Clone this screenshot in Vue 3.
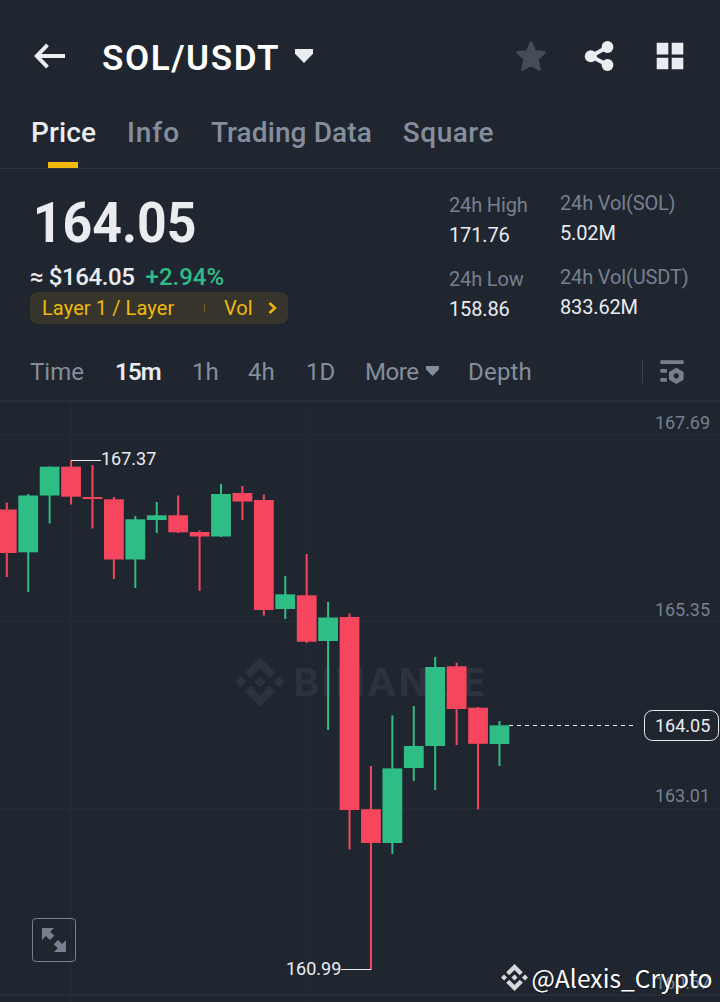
<template>
  <div class="page">
    <header class="header">
      <svg class="back" viewBox="0 0 32 26" width="32" height="26">
        <path d="M13.5 1.8 2.8 13l10.7 11.2M2.8 13H31" fill="none" stroke="#eaecef" stroke-width="3.9" />
      </svg>
      <h1 class="pair">SOL/USDT</h1>
      <svg class="caret" viewBox="0 0 18 14" width="18" height="14">
        <path d="M0 0h18v4.8L9 14 0 4.8z" fill="#eaecef" />
      </svg>
      <div class="actions">
        <svg viewBox="0 0 32 32" width="32" height="32">
          <path
            d="M16 2.5 20 11.4 29.6 12.3 22.5 19.2 24.6 29.6 16 24.6 7.4 29.6 9.5 19.2 2.4 12.3 12 11.4z"
            fill="#474d57" stroke="#474d57" stroke-width="2.4" stroke-linejoin="round"
          />
        </svg>
        <svg viewBox="0 0 30 32" width="30" height="32">
          <path d="M23.5 7 7 16.2 23.5 25" fill="none" stroke="#eaecef" stroke-width="4" />
          <circle cx="6.8" cy="16.2" r="6" fill="#eaecef" />
          <circle cx="23.5" cy="7" r="5.9" fill="#eaecef" />
          <circle cx="23.5" cy="25" r="5.9" fill="#eaecef" />
        </svg>
        <svg class="grid" viewBox="0 0 28 28" width="28" height="28">
          <path d="M.7.7h11.6v11.8H.7zM15.7.7h11.6v11.8H15.7zM.7 15.7h11.6v11.6H.7zM15.7 15.7h11.6v11.6H15.7z" fill="#eaecef" />
        </svg>
      </div>
    </header>

    <nav class="tabs">
      <div v-for="t in tabs" :key="t.key" class="tab" :class="[t.key, { active: t.key === activeTab }]" @click="activeTab = t.key">
        {{ t.label }}
      </div>
    </nav>

    <section class="summary">
      <div class="quote">
        <div class="last">164.05</div>
        <div class="fiat">
          <span class="usd">≈ $164.05</span>
          <span class="change">+2.94%</span>
        </div>
        <div class="tags">
          <span class="sector">Layer 1 / Layer</span>
          <i class="split"></i>
          <span class="vol">Vol</span>
          <svg class="chevron" viewBox="0 0 9 12" width="9" height="12">
            <path d="M1.5 1 7 6l-5.5 5" fill="none" stroke="#f0b90b" stroke-width="2.4" />
          </svg>
        </div>
      </div>
      <div v-for="(col, i) in stats" :key="i" class="stats" :class="'col' + i">
        <div v-for="s in col" :key="s.label" class="stat">
          <div class="label">{{ s.label }}</div>
          <div class="value">{{ s.value }}</div>
        </div>
      </div>
    </section>

    <div class="intervals">
      <span v-for="v in intervals" :key="v" :class="{ active: v === interval }" @click="interval = v">{{ v }}</span>
      <span class="more">
        More
        <svg viewBox="0 0 13 10" width="13" height="10">
          <path d="M0 0h13v3.2L6.5 10 0 3.2z" fill="#848e9c" />
        </svg>
      </span>
      <span class="depth">Depth</span>
      <i class="divider"></i>
      <svg class="settings" viewBox="0 0 24 24" width="24" height="24">
        <g fill="#76808f">
          <path d="M.4.2h23.2v3.9H.4zM.4 9h6.5v3.7H.4zM.4 18h6.5v3.7H.4z" />
          <path d="M16.3 7.8 23.6 12v7.8L16.3 24 9 19.8V12zM16.3 13.2a2.7 2.7 0 1 0 .01 0z" fill-rule="evenodd" />
        </g>
      </svg>
    </div>

    <div class="chart">
      <svg viewBox="0 402 720 600" width="720" height="600">
        <g fill="#262c36">
          <rect v-for="y in gridY" :key="y" x="0" :y="y" width="720" height="1" />
          <rect v-for="x in gridX" :key="x" :x="x" y="402" width="1" height="600" />
          <rect x="0" y="994" width="720" height="2" fill="#282e39" />
        </g>

        <g fill="#2d333e">
          <path :d="logo" transform="translate(235.4 657.2) scale(.389)" />
          <text class="brand" x="293.5" y="696" textLength="192">BINANCE</text>
        </g>

        <g class="axis">
          <text v-for="p in axis" :key="p.label" x="655" :y="p.y" textLength="55">{{ p.label }}</text>
        </g>

        <g v-for="(c, i) in candles" :key="i" :fill="c[4] ? '#2ebd85' : '#f6465d'">
          <rect :x="cx(i) - 1" :y="c[0]" width="2" :height="c[3] - c[0]" />
          <rect :x="cx(i) - 9.9" :y="c[1]" width="19.8" :height="c[2] - c[1]" />
        </g>

        <path d="M71 460.5h30M341 969.5h30.5" stroke="#eaecef" />
        <text class="mark" x="101" y="465">167.37</text>
        <text class="mark" x="286" y="975">160.99</text>

        <path d="M509 725.5h125" stroke="#eaecef" stroke-dasharray="4 4" />
        <rect x="644.5" y="710.5" width="74" height="30" rx="8" fill="#202630" stroke="#eaecef" />
        <text class="mark" x="655" y="732">164.05</text>
      </svg>

      <button class="expand">
        <svg viewBox="0 0 24 24" width="24" height="24">
          <path d="M0 0h12L8.3 3.7l4 4-4.4 4.4-4-4L0 12zM24 24H12l3.7-3.7-4-4 4.4-4.4 4 4L24 12z" fill="#76808f" />
        </svg>
      </button>

      <div class="signature">
        <svg viewBox="0 0 126.6 126.6" width="27" height="27"><path :d="logo" fill="#d8d8d8" /></svg>
        <span>@Alexis_Crypto</span>
      </div>
    </div>
  </div>
</template>

<script setup>
import { ref } from "vue";

const activeTab = ref("price");
const interval = ref("15m");

const tabs = [
  { key: "price", label: "Price" },
  { key: "info", label: "Info" },
  { key: "trading", label: "Trading Data" },
  { key: "square", label: "Square" }
];

const stats = [
  [
    { label: "24h High", value: "171.76" },
    { label: "24h Low", value: "158.86" }
  ],
  [
    { label: "24h Vol(SOL)", value: "5.02M" },
    { label: "24h Vol(USDT)", value: "833.62M" }
  ]
];

const intervals = ["Time", "15m", "1h", "4h", "1D"];

const gridY = [434, 621, 808];
const gridX = [70.5, 306];
const axis = [
  { label: "167.69", y: 429 },
  { label: "165.35", y: 616 },
  { label: "163.01", y: 802 },
  { label: "160.67", y: 989 }
];

// wick top, body top, body bottom, wick bottom, rising
const candles = [
  [502.5, 509.5, 553, 577, 0],
  [494, 495.5, 552.3, 592, 1],
  [466.5, 466.7, 495.5, 523.5, 1],
  [460.5, 466.7, 496.7, 504.5, 0],
  [465, 497, 499, 528.5, 0],
  [497, 499.3, 559.5, 579, 0],
  [516, 519.3, 559.5, 588, 1],
  [502, 515.3, 520, 533, 1],
  [495.5, 515.3, 532.3, 533, 0],
  [530.5, 532, 536.5, 590.7, 0],
  [484, 494, 536.5, 537, 1],
  [486, 493, 501.5, 520, 0],
  [494.5, 500, 610, 615.5, 0],
  [576, 594.3, 609, 619, 1],
  [554, 595.3, 641.7, 643, 0],
  [602, 617.5, 641, 730, 1],
  [613.5, 617, 810, 849.5, 0],
  [766, 809.2, 843, 969, 0],
  [715.5, 768.4, 843, 854, 1],
  [706, 746, 768, 781, 1],
  [657, 667, 746, 790, 1],
  [662.7, 666.3, 709, 745, 0],
  [707, 707.7, 743.8, 809.5, 0],
  [721, 725.3, 744, 766, 1]
];
const cx = (i) => 6.8 + i * 21.42;

const logo =
  "M38.73 53.2 63.31 28.62 87.9 53.22 102.2 38.91 63.31 0 24.42 38.89z" +
  "M0 63.31 14.3 49 28.6 63.3 14.3 77.6z" +
  "M38.73 73.41 63.31 98 87.9 73.4 102.2 87.69 63.31 126.61 24.42 87.74z" +
  "M98 63.31 112.3 49 126.6 63.3 112.3 77.6z" +
  "M77.83 63.3 63.32 48.78 48.8 63.3 63.32 77.82z";
</script>

<style>
body { margin: 0; background: #202630; }
</style>

<style scoped>
.page { width: 720px; height: 1002px; overflow: hidden; display: flex; flex-direction: column; background: #202630; color: #eaecef; font-family: Roboto, "Liberation Sans", sans-serif; white-space: nowrap; }
svg { display: block; flex: none; }

.header { height: 112px; box-sizing: border-box; display: flex; align-items: center; padding: 0 36px 0 34px; }
.pair { margin: 5px 0 0 36px; width: 178px; font-size: 35px; line-height: 40px; font-weight: 600; letter-spacing: 1.6px; color: #fff; }
.caret { margin-left: 15px; margin-top: -1px; }
.actions { margin-left: auto; display: flex; align-items: center; gap: 37px; }
.grid { margin-left: 5px; }

.tabs { height: 56px; flex: none; display: flex; padding-left: 31px; gap: 31px; border-bottom: 1px solid #2f3641; font-size: 28px; line-height: 42px; font-weight: 500; letter-spacing: 0.1px; color: #848e9c; }
.tab { height: 56px; position: relative; }
.info { letter-spacing: 0.9px; }
.square { letter-spacing: 0.5px; }
.tab.active { color: #eaecef; }
.tab.active::after { content: ""; position: absolute; left: 17px; bottom: 0; width: 30px; height: 6px; background: #f0b90b; }

.summary { height: 176px; flex: none; display: flex; padding-left: 30px; }
.quote { width: 419px; padding-top: 22px; }
.last { height: 65px; padding-left: 3px; font-size: 56px; line-height: 65px; font-weight: 700; letter-spacing: 0; transform: scaleX(0.925); transform-origin: left; }
.fiat { height: 30px; padding-top: 6px; display: flex; align-items: center; gap: 11px; font-size: 24px; font-weight: 500; letter-spacing: -0.4px; }
.change { color: #2ebd85; letter-spacing: 0; }
.tags { width: 258px; height: 32px; box-sizing: border-box; display: flex; align-items: center; padding-left: 12px; border-radius: 8px; background: #36342b; color: #f0b90b; font-size: 20px; }
.sector { width: 162px; letter-spacing: 0.1px; }
.split { width: 1px; height: 8px; background: #7a6420; }
.vol { width: 44px; margin-left: 19px; }

.stats { padding-top: 23px; }
.col0 { width: 111px; }
.col1 { padding-top: 21px; }
.stat { height: 74px; font-size: 20px; letter-spacing: -0.15px; }
.label { line-height: 26px; color: #76808f; }
.value { margin-top: 4px; line-height: 26px; }

.intervals { height: 57px; flex: none; display: grid; grid-template-columns: 85px 77px 56px 58px 59px 103px 174px 18px 24px; align-items: center; padding: 0 0 2px 30px; border-bottom: 2px solid #282e39; box-sizing: border-box; font-size: 24px; line-height: 30px; color: #848e9c; }
.intervals .active { color: #eaecef; font-weight: 600; letter-spacing: -0.8px; }
.more { display: flex; align-items: center; gap: 7px; letter-spacing: -0.4px; }
.more svg { margin-top: -2px; }
.depth { letter-spacing: 0.2px; }
.divider { width: 1px; height: 24px; margin-top: -2px; background: #39414d; }

.chart { position: relative; height: 600px; flex: none; }
.brand { font-family: Inter, sans-serif; font-size: 38.5px; font-weight: 700; }
.axis { fill: #76808f; font-size: 18px; }
.mark { fill: #eaecef; font-size: 18px; }
.expand { position: absolute; left: 32px; top: 516px; width: 44px; height: 44px; padding: 0; display: flex; align-items: center; justify-content: center; border: 1px solid #76808f; border-radius: 4px; background: transparent; }
.signature { position: absolute; left: 500.5px; top: 557px; display: flex; align-items: center; gap: 4px; color: #fff; font-family: "Noto Sans CJK SC", sans-serif; font-size: 24.7px; line-height: 36px; text-shadow: 1px 1px 1px rgba(0, 0, 0, 0.5); }
</style>
